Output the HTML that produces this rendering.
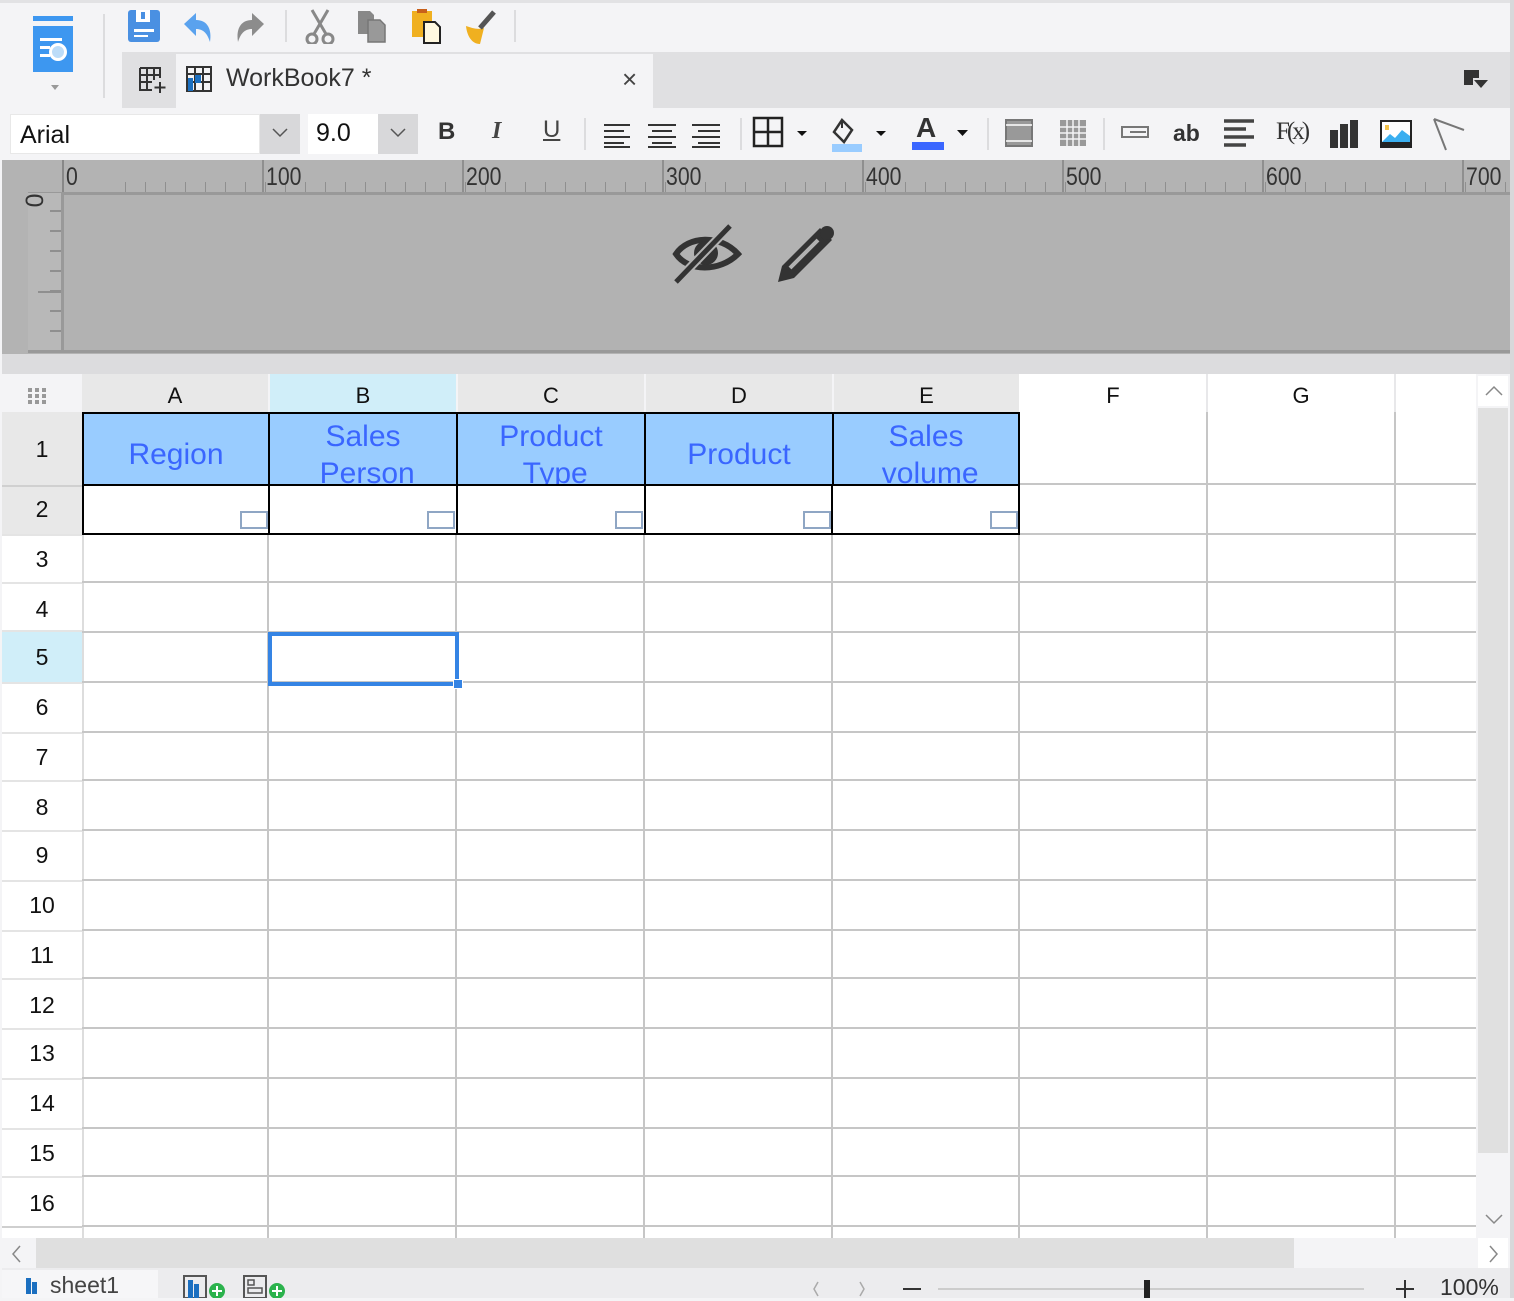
<!DOCTYPE html>
<html><head><meta charset="utf-8"><style>
*{margin:0;padding:0;box-sizing:border-box}
body{width:1514px;height:1298px;position:relative;overflow:hidden;background:#f4f4f6;font-family:"Liberation Sans",sans-serif;color:#222}
.a{position:absolute}
.sep{position:absolute;width:2px;background:#dcdcde}
.ic{position:absolute}
.rl{position:absolute;top:163px;font-size:25px;color:#333;transform:scaleX(.85);transform-origin:left}
.ch{position:absolute;top:374px;height:38px;font-size:22px;text-align:center;line-height:44px;color:#111}
.rh{position:absolute;left:2px;width:80px;font-size:23px;text-align:center;color:#111}
.vl{position:absolute;top:412px;width:2px;height:826px;background:#c6c6c6}
.hl{position:absolute;left:82px;width:1394px;height:2px;background:#c6c6c6}
.hd{position:absolute;top:412px;height:74px;background:#99ccff;color:#3a66ff;font-size:30px;text-align:center;line-height:37px;overflow:hidden;border:2px solid #000;border-bottom:none}
.bx{position:absolute;width:28px;height:18px;border:2px solid #8fa6c4;background:#fff}
</style></head><body>
<div class="a" style="left:0;top:0;width:1514px;height:3px;background:#e2e2e4"></div>
<div class="a" style="left:33px;top:16px;width:40px;height:5px;background:#3d97f0"></div>
<div class="a" style="left:33px;top:26px;width:40px;height:46px;background:#3d97f0"></div>
<div class="a" style="left:40px;top:38px;width:22px;height:3px;background:#fff"></div>
<div class="a" style="left:40px;top:46px;width:10px;height:3px;background:#fff"></div>
<div class="a" style="left:40px;top:54px;width:10px;height:3px;background:#fff"></div>
<div class="a" style="left:49px;top:43px;width:18px;height:18px;border:3px solid #fff;border-radius:50%;background:#bcdcf8"></div>
<div class="a" style="left:51px;top:85px;border:4px solid transparent;border-top:5px solid #999"></div>
<div class="sep" style="left:103px;top:14px;height:84px"></div>
<svg class="ic" style="left:126px;top:8px" width="36" height="36"><rect x="2" y="2" width="32" height="32" rx="3" fill="#4a90e2"/><rect x="10" y="2" width="14" height="12" fill="#fff"/><rect x="15" y="4" width="4" height="7" fill="#4a90e2"/><rect x="8" y="21" width="20" height="3" fill="#fff"/><rect x="8" y="27" width="14" height="2" fill="#fff"/></svg>
<svg class="ic" style="left:180px;top:8px" width="36" height="36"><path d="M4 16 L16 5 L16 12 C28 12 32 22 30 34 C27 24 22 21 16 21 L16 28 Z" fill="#5aa2ee"/></svg>
<svg class="ic" style="left:232px;top:8px" width="36" height="36"><path d="M32 16 L20 5 L20 12 C8 12 4 22 6 34 C9 24 14 21 20 21 L20 28 Z" fill="#8c8c8c"/></svg>
<div class="sep" style="left:285px;top:10px;height:32px"></div>
<svg class="ic" style="left:302px;top:8px" width="36" height="36"><path d="M10 2 L24 26 M26 2 L12 26" stroke="#888" stroke-width="3"/><circle cx="10" cy="31" r="5" fill="none" stroke="#888" stroke-width="3"/><circle cx="26" cy="31" r="5" fill="none" stroke="#888" stroke-width="3"/></svg>
<svg class="ic" style="left:356px;top:8px" width="36" height="36"><path d="M2 3h12l4 4v19H2z" fill="#888"/><path d="M12 12h12l5 5v17H12z" fill="#999" stroke="#777" stroke-width="1.5"/></svg>
<svg class="ic" style="left:410px;top:8px" width="36" height="36"><rect x="2" y="3" width="20" height="26" fill="#f0b020"/><rect x="7" y="1" width="10" height="4" fill="#c8601a"/><path d="M14 14h11l5 5v16H14z" fill="#fff8e0" stroke="#222" stroke-width="2"/></svg>
<svg class="ic" style="left:462px;top:8px" width="36" height="36"><path d="M4 18 C10 20 16 22 22 20 L18 36 C10 36 5 28 4 18Z" fill="#f0b020"/><path d="M18 20 L32 4" stroke="#555" stroke-width="5"/></svg>
<div class="sep" style="left:514px;top:10px;height:32px"></div>
<div class="a" style="left:122px;top:52px;width:1388px;height:56px;background:#e0e0e2"></div>
<div class="a" style="left:176px;top:54px;width:477px;height:54px;background:#f4f4f6"></div>
<svg class="ic" style="left:138px;top:65px" width="30" height="30"><path d="M2 3h20v10M2 3v22h12M2 10h20M2 17h12M9 3v22M16 3v12" stroke="#333" stroke-width="2" fill="none"/><path d="M22 17v11M16.5 22.5h11" stroke="#333" stroke-width="2"/></svg>
<svg class="ic" style="left:186px;top:66px" width="28" height="28"><rect x="1" y="1" width="24" height="24" fill="none" stroke="#333" stroke-width="2"/><path d="M1 8h24M9 1v24M17 1v24M1 16h24" stroke="#333" stroke-width="2"/><rect x="2" y="12" width="5" height="13" fill="#1b6fc0"/><rect x="9" y="9" width="6" height="8" fill="#1b6fc0"/></svg>
<div class="a" style="left:226px;top:64px;font-size:25px;color:#333">WorkBook7 *</div>
<div class="a" style="left:622px;top:64px;font-size:26px;color:#444">×</div>
<svg class="ic" style="left:1462px;top:68px" width="30" height="22"><rect x="2" y="2" width="9" height="15" fill="#333"/><rect x="2" y="2" width="15" height="8" fill="#333"/><path d="M12 12h14l-7 8z" fill="#333"/></svg>
<div class="a" style="left:10px;top:114px;width:250px;height:40px;background:#fff;border:1px solid #e8e8e8"></div>
<div class="a" style="left:260px;top:114px;width:40px;height:40px;background:#d8d8da"></div>
<div class="a" style="left:20px;top:121px;font-size:25px;color:#111">Arial</div>
<svg class="ic" style="left:270px;top:126px" width="20" height="14"><path d="M3 3l7 7 7-7" stroke="#555" stroke-width="1.5" fill="none"/></svg>
<div class="a" style="left:308px;top:114px;width:70px;height:40px;background:#fff"></div>
<div class="a" style="left:378px;top:114px;width:40px;height:40px;background:#d8d8da"></div>
<div class="a" style="left:316px;top:119px;font-size:25px;color:#111">9.0</div>
<svg class="ic" style="left:388px;top:126px" width="20" height="14"><path d="M3 3l7 7 7-7" stroke="#555" stroke-width="1.5" fill="none"/></svg>
<div class="a" style="left:438px;top:118px;font-size:24px;font-weight:bold;color:#333">B</div>
<div class="a" style="left:492px;top:118px;font-size:24px;font-style:italic;font-weight:bold;color:#444;font-family:'Liberation Serif',serif">I</div>
<div class="a" style="left:543px;top:116px;font-size:24px;color:#444;text-decoration:underline">U</div>
<div class="sep" style="left:584px;top:118px;height:32px"></div>
<svg class="ic" style="left:602px;top:122px" width="124" height="26"><g stroke="#333" stroke-width="2"><path d="M2 3h26M2 9h20M2 15h26M2 21h20M2 25h26"/><path d="M46 3h28M50 9h20M46 15h28M50 21h20M46 25h28"/><path d="M90 3h28M96 9h22M90 15h28M96 21h22M90 25h28"/></g></svg>
<div class="sep" style="left:740px;top:118px;height:32px"></div>
<svg class="ic" style="left:752px;top:116px" width="60" height="32"><rect x="2" y="2" width="28" height="28" fill="none" stroke="#222" stroke-width="2.5"/><path d="M16 2v28M2 16h28" stroke="#222" stroke-width="2.5"/><path d="M45 15h10l-5 5z" fill="#111"/></svg>
<svg class="ic" style="left:830px;top:116px" width="62" height="36"><path d="M12 4 L22 14 L14 26 L4 16Z" fill="none" stroke="#333" stroke-width="2.5"/><path d="M12 4v8" stroke="#333" stroke-width="2"/><rect x="2" y="28" width="30" height="8" fill="#99ccff"/><path d="M46 15h10l-5 5z" fill="#111"/></svg>
<div class="a" style="left:916px;top:112px;font-size:28px;font-weight:bold;color:#333">A</div>
<div class="a" style="left:912px;top:142px;width:32px;height:8px;background:#3a66ff"></div>
<svg class="ic" style="left:956px;top:128px" width="14" height="10"><path d="M1 2h11l-5.5 6z" fill="#111"/></svg>
<div class="sep" style="left:987px;top:118px;height:32px"></div>
<svg class="ic" style="left:1004px;top:118px" width="32" height="30"><rect x="2" y="2" width="26" height="26" fill="#999" stroke="#777" stroke-width="2"/><path d="M2 7h26M2 23h26" stroke="#fff" stroke-width="1.5"/></svg>
<svg class="ic" style="left:1058px;top:118px" width="32" height="30"><rect x="2" y="2" width="26" height="26" fill="#999"/><path d="M2 9h26M2 15h26M2 21h26M9 2v26M15 2v26M21 2v26" stroke="#f4f4f6" stroke-width="1.5"/></svg>
<div class="sep" style="left:1103px;top:118px;height:32px"></div>
<svg class="ic" style="left:1120px;top:124px" width="32" height="18"><rect x="2" y="3" width="26" height="10" fill="none" stroke="#777" stroke-width="2"/><rect x="10" y="7" width="16" height="2" fill="#777"/></svg>
<div class="a" style="left:1173px;top:120px;font-size:23px;font-weight:bold;color:#333">ab</div>
<svg class="ic" style="left:1222px;top:118px" width="34" height="32"><path d="M2 3h30M2 11h22M2 19h30M2 27h22" stroke="#444" stroke-width="3.5"/></svg>
<div class="a" style="left:1276px;top:118px;font-size:25px;color:#333;font-family:'Liberation Serif',serif;letter-spacing:-3px">F(x)</div>
<svg class="ic" style="left:1328px;top:118px" width="34" height="32"><rect x="2" y="12" width="8" height="18" fill="#333"/><rect x="12" y="6" width="8" height="24" fill="#333"/><rect x="22" y="2" width="8" height="28" fill="#333"/></svg>
<svg class="ic" style="left:1378px;top:118px" width="36" height="32"><rect x="2" y="2" width="32" height="28" fill="#222"/><rect x="4" y="4" width="28" height="20" fill="#fff"/><path d="M4 24 L12 16 L17 20 L24 12 L32 18 V24Z" fill="#3aaff0"/><rect x="7" y="7" width="4" height="5" fill="#f3c24b"/></svg>
<svg class="ic" style="left:1430px;top:116px" width="40" height="36"><path d="M4 3 L34 14 M4 3 L16 34" stroke="#777" stroke-width="2"/></svg>
<div class="a" style="left:2px;top:160px;width:1508px;height:194px;background:#b3b3b3"></div>
<div class="a" style="left:62px;top:160px;width:1448px;height:33px;background:repeating-linear-gradient(90deg,transparent 0 19px,#8f8f8f 19px 20px) 44px 22px/1448px 11px no-repeat,#b3b3b3"></div>
<div class="a" style="left:62px;top:160px;width:1448px;height:33px;background:repeating-linear-gradient(90deg,#8f8f8f 0 2px,transparent 2px 200px);"></div>
<div class="a" style="left:62px;top:160px;width:2px;height:33px;background:#888"></div>
<div class="a" style="left:28px;top:192px;width:1482px;height:3px;background:#999"></div>
<div class="a" style="left:28px;top:193px;width:34px;height:160px;background:#b8b8b8"></div>
<div class="a" style="left:50px;top:210px;width:12px;height:140px;background:repeating-linear-gradient(180deg,#8f8f8f 0 2px,transparent 2px 20px)"></div>
<div class="a" style="left:38px;top:291px;width:24px;height:2px;background:#8f8f8f"></div>
<div class="a" style="left:61px;top:193px;width:3px;height:160px;background:#999"></div>
<div class="a" style="left:64px;top:195px;width:1446px;height:156px;background:#b2b2b2"></div>
<div class="a" style="left:28px;top:350px;width:1482px;height:3px;background:#999"></div>
<div class="a" style="left:26px;top:186px;font-size:25px;color:#333;transform:rotate(90deg)">0</div>
<div class="rl" style="left:66px">0</div>
<div class="rl" style="left:266px">100</div>
<div class="rl" style="left:466px">200</div>
<div class="rl" style="left:666px">300</div>
<div class="rl" style="left:866px">400</div>
<div class="rl" style="left:1066px">500</div>
<div class="rl" style="left:1266px">600</div>
<div class="rl" style="left:1466px">700</div>
<svg class="ic" style="left:670px;top:222px" width="72" height="64"><path d="M6 32 C18 14 50 12 68 32 C50 50 18 50 6 32Z" fill="none" stroke="#333" stroke-width="6"/><circle cx="36" cy="31" r="12" fill="#333"/><path d="M6 60 L60 4" stroke="#b2b2b2" stroke-width="9"/><path d="M6 60 L60 4" stroke="#333" stroke-width="5"/></svg>
<svg class="ic" style="left:774px;top:222px" width="64" height="64"><path d="M4 60 L8 44 L46 6 L58 18 L20 56Z" fill="#333"/><path d="M16 46 L44 18" stroke="#b2b2b2" stroke-width="4"/><circle cx="53" cy="11" r="7" fill="#333"/></svg>
<div class="a" style="left:2px;top:354px;width:1508px;height:20px;background:#dcdcde"></div>
<div class="a" style="left:2px;top:374px;width:1474px;height:864px;background:#fff"></div>
<div class="a" style="left:2px;top:374px;width:80px;height:38px;background:#f4f4f6"></div>
<svg class="ic" style="left:28px;top:388px" width="22" height="16"><g fill="#999"><rect x="0" y="0" width="4" height="4"/><rect x="7" y="0" width="4" height="4"/><rect x="14" y="0" width="4" height="4"/><rect x="0" y="6" width="4" height="4"/><rect x="7" y="6" width="4" height="4"/><rect x="14" y="6" width="4" height="4"/><rect x="0" y="12" width="4" height="4"/><rect x="7" y="12" width="4" height="4"/><rect x="14" y="12" width="4" height="4"/></g></svg>
<div class="ch" style="left:82px;width:186px;background:#e8e8e8">A</div>
<div class="ch" style="left:270px;width:186px;background:#d0eef9">B</div>
<div class="ch" style="left:458px;width:186px;background:#e8e8e8">C</div>
<div class="ch" style="left:646px;width:186px;background:#e8e8e8">D</div>
<div class="ch" style="left:834px;width:185px;background:#e8e8e8">E</div>
<div class="ch" style="left:1020px;width:186px">F</div>
<div class="ch" style="left:1208px;width:186px">G</div>
<div class="a" style="left:268px;top:374px;width:2px;height:38px;background:#f4f4f6"></div>
<div class="a" style="left:456px;top:374px;width:2px;height:38px;background:#f4f4f6"></div>
<div class="a" style="left:644px;top:374px;width:2px;height:38px;background:#f4f4f6"></div>
<div class="a" style="left:832px;top:374px;width:2px;height:38px;background:#f4f4f6"></div>
<div class="a" style="left:1206px;top:374px;width:2px;height:38px;background:#e8e8ea"></div>
<div class="a" style="left:1394px;top:374px;width:2px;height:38px;background:#e8e8ea"></div>
<div class="a" style="left:2px;top:412px;width:80px;height:122px;background:#e8e8e8"></div>
<div class="a" style="left:2px;top:632px;width:80px;height:50px;background:#d0eef9"></div>
<div class="a" style="left:2px;top:485px;width:80px;height:2px;background:#d0d0d0"></div>
<div class="rh" style="top:436px">1</div>
<div class="rh" style="top:496px">2</div>
<div class="rh" style="top:546px">3</div>
<div class="rh" style="top:596px">4</div>
<div class="rh" style="top:644px">5</div>
<div class="rh" style="top:694px">6</div>
<div class="rh" style="top:744px">7</div>
<div class="rh" style="top:794px">8</div>
<div class="rh" style="top:842px">9</div>
<div class="rh" style="top:892px">10</div>
<div class="rh" style="top:942px">11</div>
<div class="rh" style="top:992px">12</div>
<div class="rh" style="top:1040px">13</div>
<div class="rh" style="top:1090px">14</div>
<div class="rh" style="top:1140px">15</div>
<div class="rh" style="top:1190px">16</div>
<div class="a" style="left:2px;top:534px;width:80px;height:2px;background:#e4e4e4"></div>
<div class="a" style="left:2px;top:582px;width:80px;height:2px;background:#e4e4e4"></div>
<div class="a" style="left:2px;top:630px;width:80px;height:2px;background:#e4e4e4"></div>
<div class="a" style="left:2px;top:682px;width:80px;height:2px;background:#e4e4e4"></div>
<div class="a" style="left:2px;top:732px;width:80px;height:2px;background:#e4e4e4"></div>
<div class="a" style="left:2px;top:780px;width:80px;height:2px;background:#e4e4e4"></div>
<div class="a" style="left:2px;top:830px;width:80px;height:2px;background:#e4e4e4"></div>
<div class="a" style="left:2px;top:880px;width:80px;height:2px;background:#e4e4e4"></div>
<div class="a" style="left:2px;top:930px;width:80px;height:2px;background:#e4e4e4"></div>
<div class="a" style="left:2px;top:978px;width:80px;height:2px;background:#e4e4e4"></div>
<div class="a" style="left:2px;top:1028px;width:80px;height:2px;background:#e4e4e4"></div>
<div class="a" style="left:2px;top:1078px;width:80px;height:2px;background:#e4e4e4"></div>
<div class="a" style="left:2px;top:1128px;width:80px;height:2px;background:#e4e4e4"></div>
<div class="a" style="left:2px;top:1176px;width:80px;height:2px;background:#e4e4e4"></div>
<div class="a" style="left:2px;top:1226px;width:80px;height:2px;background:#cfcfcf"></div>
<div class="vl" style="left:82px;background:#ddd"></div>
<div class="vl" style="left:267px"></div>
<div class="vl" style="left:455px"></div>
<div class="vl" style="left:643px"></div>
<div class="vl" style="left:831px"></div>
<div class="vl" style="left:1018px"></div>
<div class="vl" style="left:1206px"></div>
<div class="vl" style="left:1394px"></div>
<div class="hl" style="top:483px"></div>
<div class="hl" style="top:533px"></div>
<div class="hl" style="top:581px"></div>
<div class="hl" style="top:631px"></div>
<div class="hl" style="top:681px"></div>
<div class="hl" style="top:731px"></div>
<div class="hl" style="top:779px"></div>
<div class="hl" style="top:829px"></div>
<div class="hl" style="top:879px"></div>
<div class="hl" style="top:929px"></div>
<div class="hl" style="top:977px"></div>
<div class="hl" style="top:1027px"></div>
<div class="hl" style="top:1077px"></div>
<div class="hl" style="top:1127px"></div>
<div class="hl" style="top:1175px"></div>
<div class="hl" style="top:1225px"></div>
<div class="hd" style="left:82px;width:188px;line-height:74px;padding-top:4px">Region</div>
<div class="hd" style="left:268px;width:190px;padding-top:4px">Sales<br>&nbsp;Person</div>
<div class="hd" style="left:456px;width:190px;padding-top:4px">Product<br>&nbsp;Type</div>
<div class="hd" style="left:644px;width:190px;line-height:74px;padding-top:4px">Product</div>
<div class="hd" style="left:832px;width:188px;padding-top:4px">Sales<br>&nbsp;volume</div>
<div class="a" style="left:82px;top:484px;width:938px;height:51px;border:2px solid #000;background:#fff"></div>
<div class="a" style="left:268px;top:484px;width:2px;height:50px;background:#000"></div>
<div class="a" style="left:456px;top:484px;width:2px;height:50px;background:#000"></div>
<div class="a" style="left:644px;top:484px;width:2px;height:50px;background:#000"></div>
<div class="a" style="left:831px;top:484px;width:2px;height:50px;background:#000"></div>
<div class="bx" style="left:240px;top:511px"></div>
<div class="bx" style="left:427px;top:511px"></div>
<div class="bx" style="left:615px;top:511px"></div>
<div class="bx" style="left:803px;top:511px"></div>
<div class="bx" style="left:990px;top:511px"></div>
<div class="a" style="left:268px;top:632px;width:191px;height:54px;border:4px solid #3584e4"></div>
<div class="a" style="left:453px;top:679px;width:10px;height:10px;background:#3584e4;border:1px solid #fff"></div>
<div class="a" style="left:1476px;top:374px;width:34px;height:864px;background:#f4f4f6"></div>
<div class="a" style="left:1478px;top:376px;width:30px;height:30px;background:#fff"></div>
<svg class="ic" style="left:1484px;top:384px" width="20" height="14"><path d="M2 11l8-8 8 8" stroke="#888" stroke-width="1.5" fill="none"/></svg>
<div class="a" style="left:1478px;top:408px;width:30px;height:745px;background:#e0e0e0"></div>
<svg class="ic" style="left:1484px;top:1212px" width="20" height="14"><path d="M2 3l8 8 8-8" stroke="#888" stroke-width="1.5" fill="none"/></svg>
<div class="a" style="left:2px;top:1238px;width:1508px;height:30px;background:#f4f4f6"></div>
<div class="a" style="left:36px;top:1238px;width:1258px;height:30px;background:#dfdfdf"></div>
<svg class="ic" style="left:10px;top:1244px" width="14" height="20"><path d="M10 2l-7 8 7 8" stroke="#888" stroke-width="1.5" fill="none"/></svg>
<div class="a" style="left:1478px;top:1238px;width:30px;height:30px;background:#fff"></div>
<svg class="ic" style="left:1487px;top:1244px" width="14" height="20"><path d="M3 2l7 8-7 8" stroke="#888" stroke-width="1.5" fill="none"/></svg>
<div class="a" style="left:2px;top:1268px;width:1508px;height:30px;background:#ececee"></div>
<div class="a" style="left:2px;top:1270px;width:156px;height:28px;background:#f6f6f8"></div>
<div class="a" style="left:26px;top:1278px;width:5px;height:16px;background:#1b6fc0"></div>
<div class="a" style="left:32px;top:1282px;width:5px;height:12px;background:#1b6fc0"></div>
<div class="a" style="left:50px;top:1272px;font-size:23px;color:#444">sheet1</div>
<svg class="ic" style="left:182px;top:1274px" width="48" height="24"><rect x="2" y="2" width="22" height="22" fill="none" stroke="#555" stroke-width="2"/><rect x="6" y="6" width="5" height="18" fill="#1b6fc0"/><rect x="12" y="10" width="5" height="14" fill="#1b6fc0"/><circle cx="35" cy="17" r="8" fill="#2bb24c"/><path d="M35 12v10M30 17h10" stroke="#fff" stroke-width="2"/></svg>
<svg class="ic" style="left:242px;top:1274px" width="48" height="24"><rect x="2" y="2" width="22" height="22" fill="none" stroke="#555" stroke-width="2"/><rect x="6" y="6" width="6" height="5" fill="none" stroke="#555" stroke-width="1.5"/><rect x="6" y="14" width="14" height="5" fill="none" stroke="#555" stroke-width="1.5"/><circle cx="35" cy="17" r="8" fill="#2bb24c"/><path d="M35 12v10M30 17h10" stroke="#fff" stroke-width="2"/></svg>
<svg class="ic" style="left:808px;top:1280px" width="60" height="18"><path d="M10 2l-4 7 4 7M52 2l4 7-4 7" stroke="#aaa" stroke-width="1.5" fill="none"/></svg>
<div class="a" style="left:903px;top:1288px;width:18px;height:2px;background:#333"></div>
<div class="a" style="left:938px;top:1288px;width:426px;height:2px;background:#ccc"></div>
<div class="a" style="left:1144px;top:1280px;width:6px;height:18px;background:#222"></div>
<div class="a" style="left:1396px;top:1288px;width:18px;height:2px;background:#333"></div>
<div class="a" style="left:1404px;top:1280px;width:2px;height:18px;background:#333"></div>
<div class="a" style="left:1440px;top:1274px;font-size:23px;color:#333">100%</div>
<div class="a" style="left:1510px;top:0;width:4px;height:1298px;background:#d8d8da"></div>
</body></html>
